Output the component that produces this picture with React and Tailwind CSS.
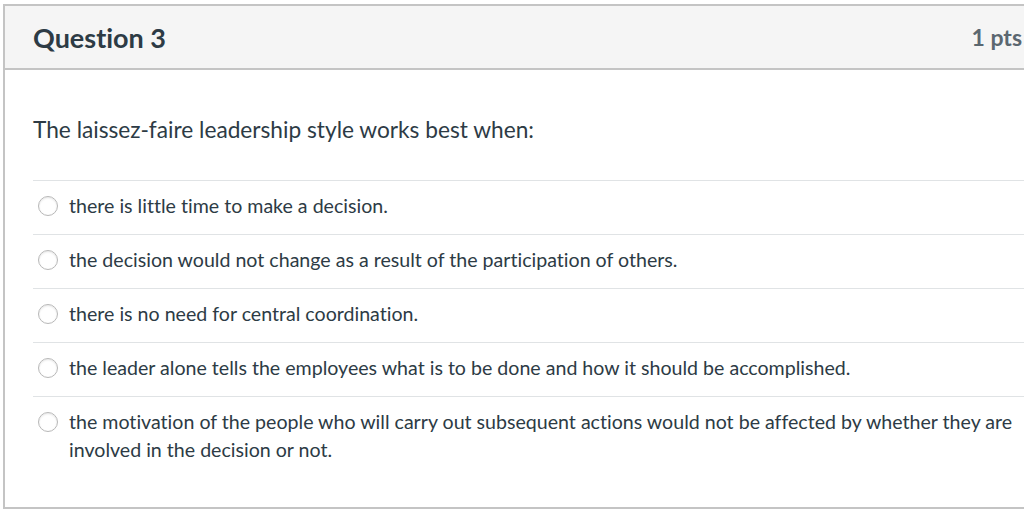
const answers = [
  "there is little time to make a decision.",
  "the decision would not change as a result of the participation of others.",
  "there is no need for central coordination.",
  "the leader alone tells the employees what is to be done and how it should be accomplished.",
  "the motivation of the people who will carry out subsequent actions would not be affected by whether they are involved in the decision or not.",
];

export default function App() {
  return (
    <div className="w-[1024px] h-[509px] overflow-hidden bg-white font-['Lato','Liberation_Sans',sans-serif] text-[#2d3b45] [font-variant-ligatures:none]">
      <div className="ml-[3px] mt-[4px] w-[1040px] h-[505px] border-2 border-r-0 border-solid border-[#c4c4c4]">
        <div className="flex items-center justify-between h-[64px] bg-[#f5f5f5] border-b-2 border-[#c4c4c4] pl-[28px] pr-[21px]">
          <h2 className="text-[27px] font-bold leading-none">Question 3</h2>
          <span className="text-[23px] font-bold text-[#5b6770] leading-none">1 pts</span>
        </div>
        <div className="pl-[28px] pt-[45px]">
          <p className="text-[22.7px] leading-[30px]">The laissez-faire leadership style works best when:</p>
          <div className="mt-[35px]">
            {answers.map((a, i) => (
              <div key={i} className="flex items-start border-t border-[#e0e3e5] pt-[11px] pb-[14px] min-h-[54px]">
                <span className="mt-[4px] ml-[5px] w-[20px] h-[20px] rounded-full border border-[#b8b8b8] bg-white shadow-[inset_0_1px_2px_rgba(0,0,0,0.1)] shrink-0"></span>
                <span className="ml-[11px] text-[19.6px] leading-[28px] w-[960px]">{a}</span>
              </div>
            ))}
          </div>
        </div>
      </div>
    </div>
  );
}
